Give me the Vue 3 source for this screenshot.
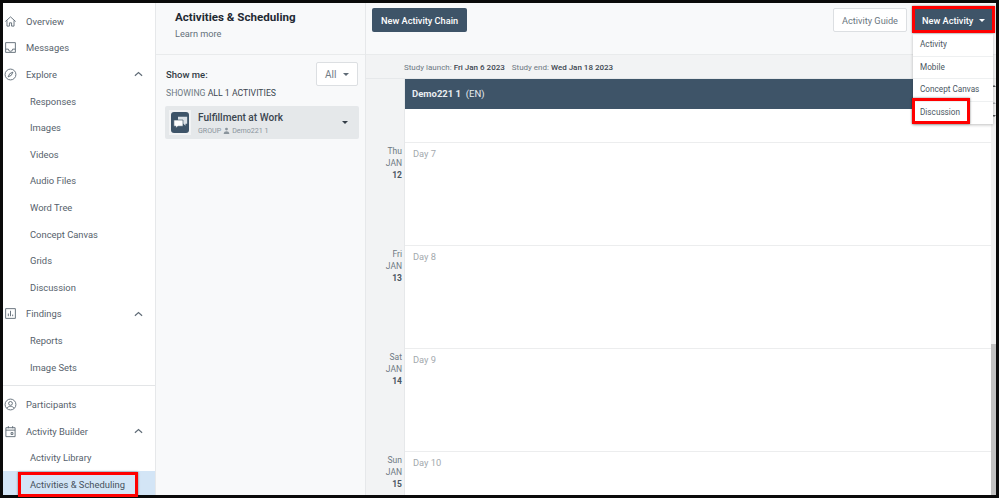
<template>
  <div class="frame">
    <aside class="sidebar">
      <div
        v-for="item in navTop"
        :key="item.label"
        class="nav-row"
        :class="{ sub: item.sub }"
      >
        <svg v-if="item.icon" class="nav-icon" viewBox="0 0 24 24" fill="none" stroke="#5f6b76" stroke-width="1.7">
          <path v-for="d in icons[item.icon]" :key="d" :d="d" />
        </svg>
        <span>{{ item.label }}</span>
        <svg v-if="item.open" class="chev" viewBox="0 0 10 6" fill="none" stroke="#5f6b76" stroke-width="1.3"><path d="M1 5l4-3.600L9 5" /></svg>
      </div>
      <div class="nav-divider"></div>
      <div
        v-for="item in navBottom"
        :key="item.label"
        class="nav-row"
        :class="{ sub: item.sub, current: item.current }"
      >
        <svg v-if="item.icon" class="nav-icon" viewBox="0 0 24 24" fill="none" stroke="#5f6b76" stroke-width="1.7">
          <path v-for="d in icons[item.icon]" :key="d" :d="d" />
        </svg>
        <span>{{ item.label }}</span>
        <svg v-if="item.open" class="chev" viewBox="0 0 10 6" fill="none" stroke="#5f6b76" stroke-width="1.3"><path d="M1 5l4-3.600L9 5" /></svg>
      </div>
    </aside>

    <section class="activities">
      <header class="activities-head">
        <h1>Activities &amp; Scheduling</h1>
        <a>Learn more</a>
      </header>
      <div class="activities-body">
        <div class="show-row">
          <b>Show me:</b>
          <div class="select">All <i class="caret grey"></i></div>
        </div>
        <p class="showing">SHOWING <span>ALL 1 ACTIVITIES</span></p>
        <div class="activity-card">
          <div class="thumb">
            <div class="thumb-inner">
              <svg viewBox="0 0 18 18" width="15" height="15">
                <path d="M6 2h11v8.500h-2v2.500l-2.500-2.500H6z" fill="#dbe1e6" />
                <path d="M1 6h11v7.500H6L3.500 16v-2.500H1z" fill="#fff" stroke="#3e5468" stroke-width=".8" />
              </svg>
            </div>
          </div>
          <div class="card-text">
            <div class="card-title">Fulfillment at Work</div>
            <div class="card-sub">
              GROUP
              <svg viewBox="0 0 10 10" width="7" height="7"><circle cx="5" cy="3" r="2" fill="#8a949c" /><path d="M1 10c0-3 2-4 4-4s4 1 4 4z" fill="#8a949c" /></svg>
              Demo221 1
            </div>
          </div>
          <i class="caret dark"></i>
        </div>
      </div>
    </section>

    <main class="schedule">
      <div class="toolbar">
        <button class="btn-dark">New Activity Chain</button>
        <div class="toolbar-right">
          <button class="btn-light">Activity Guide</button>
          <div class="new-activity">
            <button class="btn-dark split">New Activity <i class="caret white"></i></button>
            <ul class="menu">
              <li>Activity</li>
              <li>Mobile</li>
              <li>Concept Canvas</li>
              <li>Discussion<span class="mark"></span></li>
            </ul>
            <span class="mark"></span>
          </div>
        </div>
      </div>
      <div class="study-dates">
        Study launch: <b>Fri Jan 6 2023</b><span class="gap"></span>Study end: <b>Wed Jan 18 2023</b>
      </div>
      <div class="calendar">
        <div class="calendar-main">
          <div class="cal-row head-row">
            <div class="date-col"></div>
            <div class="demo-head"><b>Demo221 1</b>&nbsp; (EN)</div>
          </div>
          <div class="cal-row blank-row">
            <div class="date-col"></div>
            <div class="day-cell"></div>
          </div>
          <div v-for="d in days" :key="d.day" class="cal-row day-row">
            <div class="date-col date">
              <span>{{ d.name }}</span>
              <span>JAN</span>
              <b>{{ d.num }}</b>
            </div>
            <div class="day-cell">Day {{ d.day }}</div>
          </div>
        </div>
        <div class="scrollbar">
          <i class="arrow up"></i>
          <i class="arrow up light"></i>
          <i class="arrow down"></i>
          <div class="thumb-bar"></div>
        </div>
      </div>
    </main>

    <span class="mark nav-mark"></span>
  </div>
</template>

<script setup>
const icons = {
  home: ['M2.500 12L12 3.500 21.500 12', 'M5.500 10v10.500h4.500v-6h4v6h4.500V10'],
  inbox: ['M3 3h18v18H3z', 'M3 15h5a4 4 0 0 0 8 0h5'],
  compass: ['M12 2a10 10 0 1 0 0 20 10 10 0 0 0 0-20z', 'M16.500 7.500l-3 6-6 3 3-6z'],
  chart: ['M3 3h18v18H3z', 'M8 17v-5', 'M12 17V7', 'M16 17v-3'],
  person: ['M12 2a10 10 0 1 0 0 20 10 10 0 0 0 0-20z', 'M12 6.500a3.500 3.500 0 1 0 0 7 3.500 3.500 0 0 0 0-7z', 'M5.500 19c1.500-3 4-3.500 6.500-3.500s5 .5 6.500 3.500'],
  calendar: ['M3.500 5h17v16.500h-17z', 'M3.500 9.500h17', 'M8 2v4', 'M16 2v4', 'M13 14h3.500v3.500H13z']
}

const navTop = [
  { label: 'Overview', icon: 'home' },
  { label: 'Messages', icon: 'inbox' },
  { label: 'Explore', icon: 'compass', open: true },
  { label: 'Responses', sub: true },
  { label: 'Images', sub: true },
  { label: 'Videos', sub: true },
  { label: 'Audio Files', sub: true },
  { label: 'Word Tree', sub: true },
  { label: 'Concept Canvas', sub: true },
  { label: 'Grids', sub: true },
  { label: 'Discussion', sub: true },
  { label: 'Findings', icon: 'chart', open: true },
  { label: 'Reports', sub: true },
  { label: 'Image Sets', sub: true }
]

const navBottom = [
  { label: 'Participants', icon: 'person' },
  { label: 'Activity Builder', icon: 'calendar', open: true },
  { label: 'Activity Library', sub: true },
  { label: 'Activities & Scheduling', sub: true, current: true }
]

const days = [
  { name: 'Thu', num: 12, day: 7 },
  { name: 'Fri', num: 13, day: 8 },
  { name: 'Sat', num: 14, day: 9 },
  { name: 'Sun', num: 15, day: 10 }
]
</script>

<style scoped>
.frame {
  position: relative;
  display: flex;
  width: 999px;
  height: 498px;
  box-sizing: border-box;
  border: 3px solid #0a0a0a;
  font-family: Roboto, "Liberation Sans", sans-serif;
  color: #4a5661;
  background: #fff;
}

.sidebar {
  flex: 0 0 153px;
  box-sizing: border-box;
  padding-top: 5px;
  overflow: hidden;
  background: #fff;
  border-right: 1px solid #e6e8ea;
}
.nav-row {
  display: flex;
  align-items: center;
  height: 26.600px;
  padding-left: 1px;
  font-size: 9.400px;
  color: #56616b;
}
.nav-row.sub {
  padding-left: 27px;
}
.nav-row.current {
  background: #d3e5f6;
  color: #45515c;
}
.nav-icon {
  width: 13px;
  height: 13px;
  margin-right: 9px;
}
.chev {
  width: 9px;
  height: 6px;
  margin-left: auto;
  margin-right: 12px;
}
.nav-divider {
  height: 1px;
  margin: 5px 0;
  background: #e3e5e7;
}

.activities {
  flex: 0 0 210px;
  box-sizing: border-box;
  background: #f8f9fa;
  border-right: 1px solid #e6e8ea;
}
.activities-head {
  height: 52px;
  box-sizing: border-box;
  padding: 6px 0 0 19px;
  border-bottom: 1px solid #e9ebec;
}
.activities-head h1 {
  margin: 0;
  font-size: 11.600px;
  line-height: 16px;
  font-weight: 700;
  color: #1f2a33;
}
.activities-head a {
  display: block;
  margin-top: 3px;
  font-size: 9.200px;
  color: #65717b;
}
.activities-body {
  padding: 7px 6px 0 9px;
}
.show-row {
  display: flex;
  align-items: center;
  justify-content: space-between;
  padding: 0 1px;
}
.show-row b {
  font-size: 9.500px;
  font-weight: 500;
  color: #333d46;
}
.select {
  display: flex;
  align-items: center;
  justify-content: space-between;
  width: 42px;
  height: 24px;
  box-sizing: border-box;
  padding: 0 8px;
  background: #fff;
  border: 1px solid #dcdfe2;
  border-radius: 2px;
  font-size: 10px;
  color: #717c86;
}
.showing {
  margin: 1px 0 7px 1px;
  font-size: 8.700px;
  line-height: 12px;
  color: #6e7983;
}
.showing span {
  color: #3b4650;
}
.activity-card {
  display: flex;
  align-items: center;
  height: 33px;
  padding: 0 11px 0 4px;
  background: #e5e8ea;
  border-radius: 2px;
}
.thumb {
  padding: 2px;
  background: #f2f3f4;
}
.thumb-inner {
  display: flex;
  align-items: center;
  justify-content: center;
  width: 18px;
  height: 21px;
  background: #3e5468;
  border-radius: 3px;
}
.card-text {
  flex: 1;
  margin-left: 7px;
}
.card-title {
  font-size: 10.100px;
  line-height: 13px;
  font-weight: 500;
  color: #3b4650;
}
.card-sub {
  display: flex;
  align-items: center;
  gap: 2px;
  margin-top: 2px;
  font-size: 7.100px;
  color: #8a949c;
}

.caret {
  display: inline-block;
  flex: none;
  width: 0;
  height: 0;
  border-left: 3px solid transparent;
  border-right: 3px solid transparent;
  border-top: 3px solid #4a5661;
}
.caret.grey {
  border-top-color: #5f6b76;
}
.caret.dark {
  border-top-color: #333d46;
}
.caret.white {
  margin-left: auto;
  margin-right: -1px;
  border-top-color: #fff;
}

.schedule {
  flex: 1;
  min-width: 0;
  display: flex;
  flex-direction: column;
  background: #f8f9fa;
}
.toolbar {
  display: flex;
  justify-content: space-between;
  height: 52px;
  flex: none;
  box-sizing: border-box;
  padding: 5px 3px 0 6px;
  border-bottom: 1px solid #e9ebec;
}
.toolbar-right {
  display: flex;
  gap: 6px;
  align-items: flex-start;
}
.btn-dark,
.btn-light {
  height: 24px;
  box-sizing: border-box;
  border-radius: 2px;
  font-family: inherit;
  font-size: 9.200px;
  font-weight: 500;
  white-space: nowrap;
}
.btn-dark {
  padding: 0 9px;
  border: 0;
  background: #3e5468;
  color: #fff;
}
.btn-light {
  width: 74px;
  padding: 0;
  background: #fff;
  border: 1px solid #dcdfe2;
  color: #6b7680;
  font-weight: 400;
}
.new-activity {
  position: relative;
  width: 80px;
}
.split {
  display: flex;
  align-items: center;
  width: 100%;
}
.menu {
  position: absolute;
  top: 26px;
  left: 0;
  z-index: 3;
  width: 80px;
  margin: 0;
  padding: 0;
  list-style: none;
  background: #fff;
  box-shadow: 0 1px 3px rgba(0, 0, 0, 0.25);
}
.menu li {
  position: relative;
  height: 22.500px;
  box-sizing: border-box;
  padding-left: 7px;
  font-size: 8.200px;
  line-height: 21px;
  color: #4a5661;
  border-bottom: 1px solid #eef0f1;
}
.menu li:last-child {
  border-bottom: 0;
}
.mark {
  position: absolute;
  top: -2px;
  left: -1px;
  z-index: 4;
  width: 83px;
  height: 27px;
  border: 3px solid #f00;
  box-sizing: border-box;
  pointer-events: none;
  box-shadow: 0 0 2px rgba(0, 0, 0, 0.5);
}
.menu .mark {
  top: -3.500px;
  left: -1px;
  width: 58px;
  height: 26px;
}
.nav-mark {
  top: 469px;
  left: 15px;
  width: 120px;
  height: 25px;
}

.study-dates {
  flex: none;
  height: 24px;
  box-sizing: border-box;
  padding-left: 38px;
  font-size: 8px;
  line-height: 25px;
  color: #6e7983;
  background: #f2f3f4;
  border-bottom: 1px solid #e6e8ea;
}
.study-dates b {
  font-weight: 500;
  color: #3b4650;
}
.gap {
  display: inline-block;
  width: 7px;
}

.calendar {
  flex: 1;
  min-height: 0;
  display: flex;
  overflow: hidden;
}
.calendar-main {
  flex: 1;
  min-width: 0;
}
.cal-row {
  display: flex;
}
.date-col {
  flex: 0 0 39px;
  background: #f2f3f4;
  border-right: 1px solid #e6e8ea;
  box-sizing: border-box;
}
.head-row {
  height: 30px;
}
.demo-head {
  flex: 1;
  padding-left: 7px;
  background: #3e5468;
  color: #e9edf0;
  font-size: 9.500px;
  line-height: 29px;
}
.demo-head b {
  font-weight: 700;
}
.blank-row {
  height: 34px;
}
.day-row {
  height: 103px;
}
.day-cell {
  flex: 1;
  padding: 4px 0 0 8px;
  background: #fff;
  border-bottom: 1px solid #ecedee;
  font-size: 9.300px;
  line-height: 13px;
  color: #a3a9ae;
}
.date {
  display: flex;
  flex-direction: column;
  align-items: flex-end;
  padding: 2px 2px 0 0;
  font-size: 8.500px;
  line-height: 12px;
  color: #6e7983;
}
.date b {
  font-weight: 700;
  color: #4a5661;
}
.scrollbar {
  flex: 0 0 5px;
  display: flex;
  flex-direction: column;
  align-items: center;
  background: #f1f1f1;
}
.arrow {
  flex: none;
  width: 0;
  height: 0;
  border-left: 2px solid transparent;
  border-right: 2px solid transparent;
}
.arrow.up {
  margin-top: 6px;
  border-bottom: 2px solid #55595c;
}
.arrow.up.light {
  margin-top: 15px;
  border-bottom-color: #a9adb0;
}
.arrow.down {
  margin-top: 11px;
  border-top: 2px solid #55595c;
}
.thumb-bar {
  align-self: stretch;
  flex: none;
  height: 151px;
  margin-top: auto;
  background: #c1c1c1;
}
</style>
